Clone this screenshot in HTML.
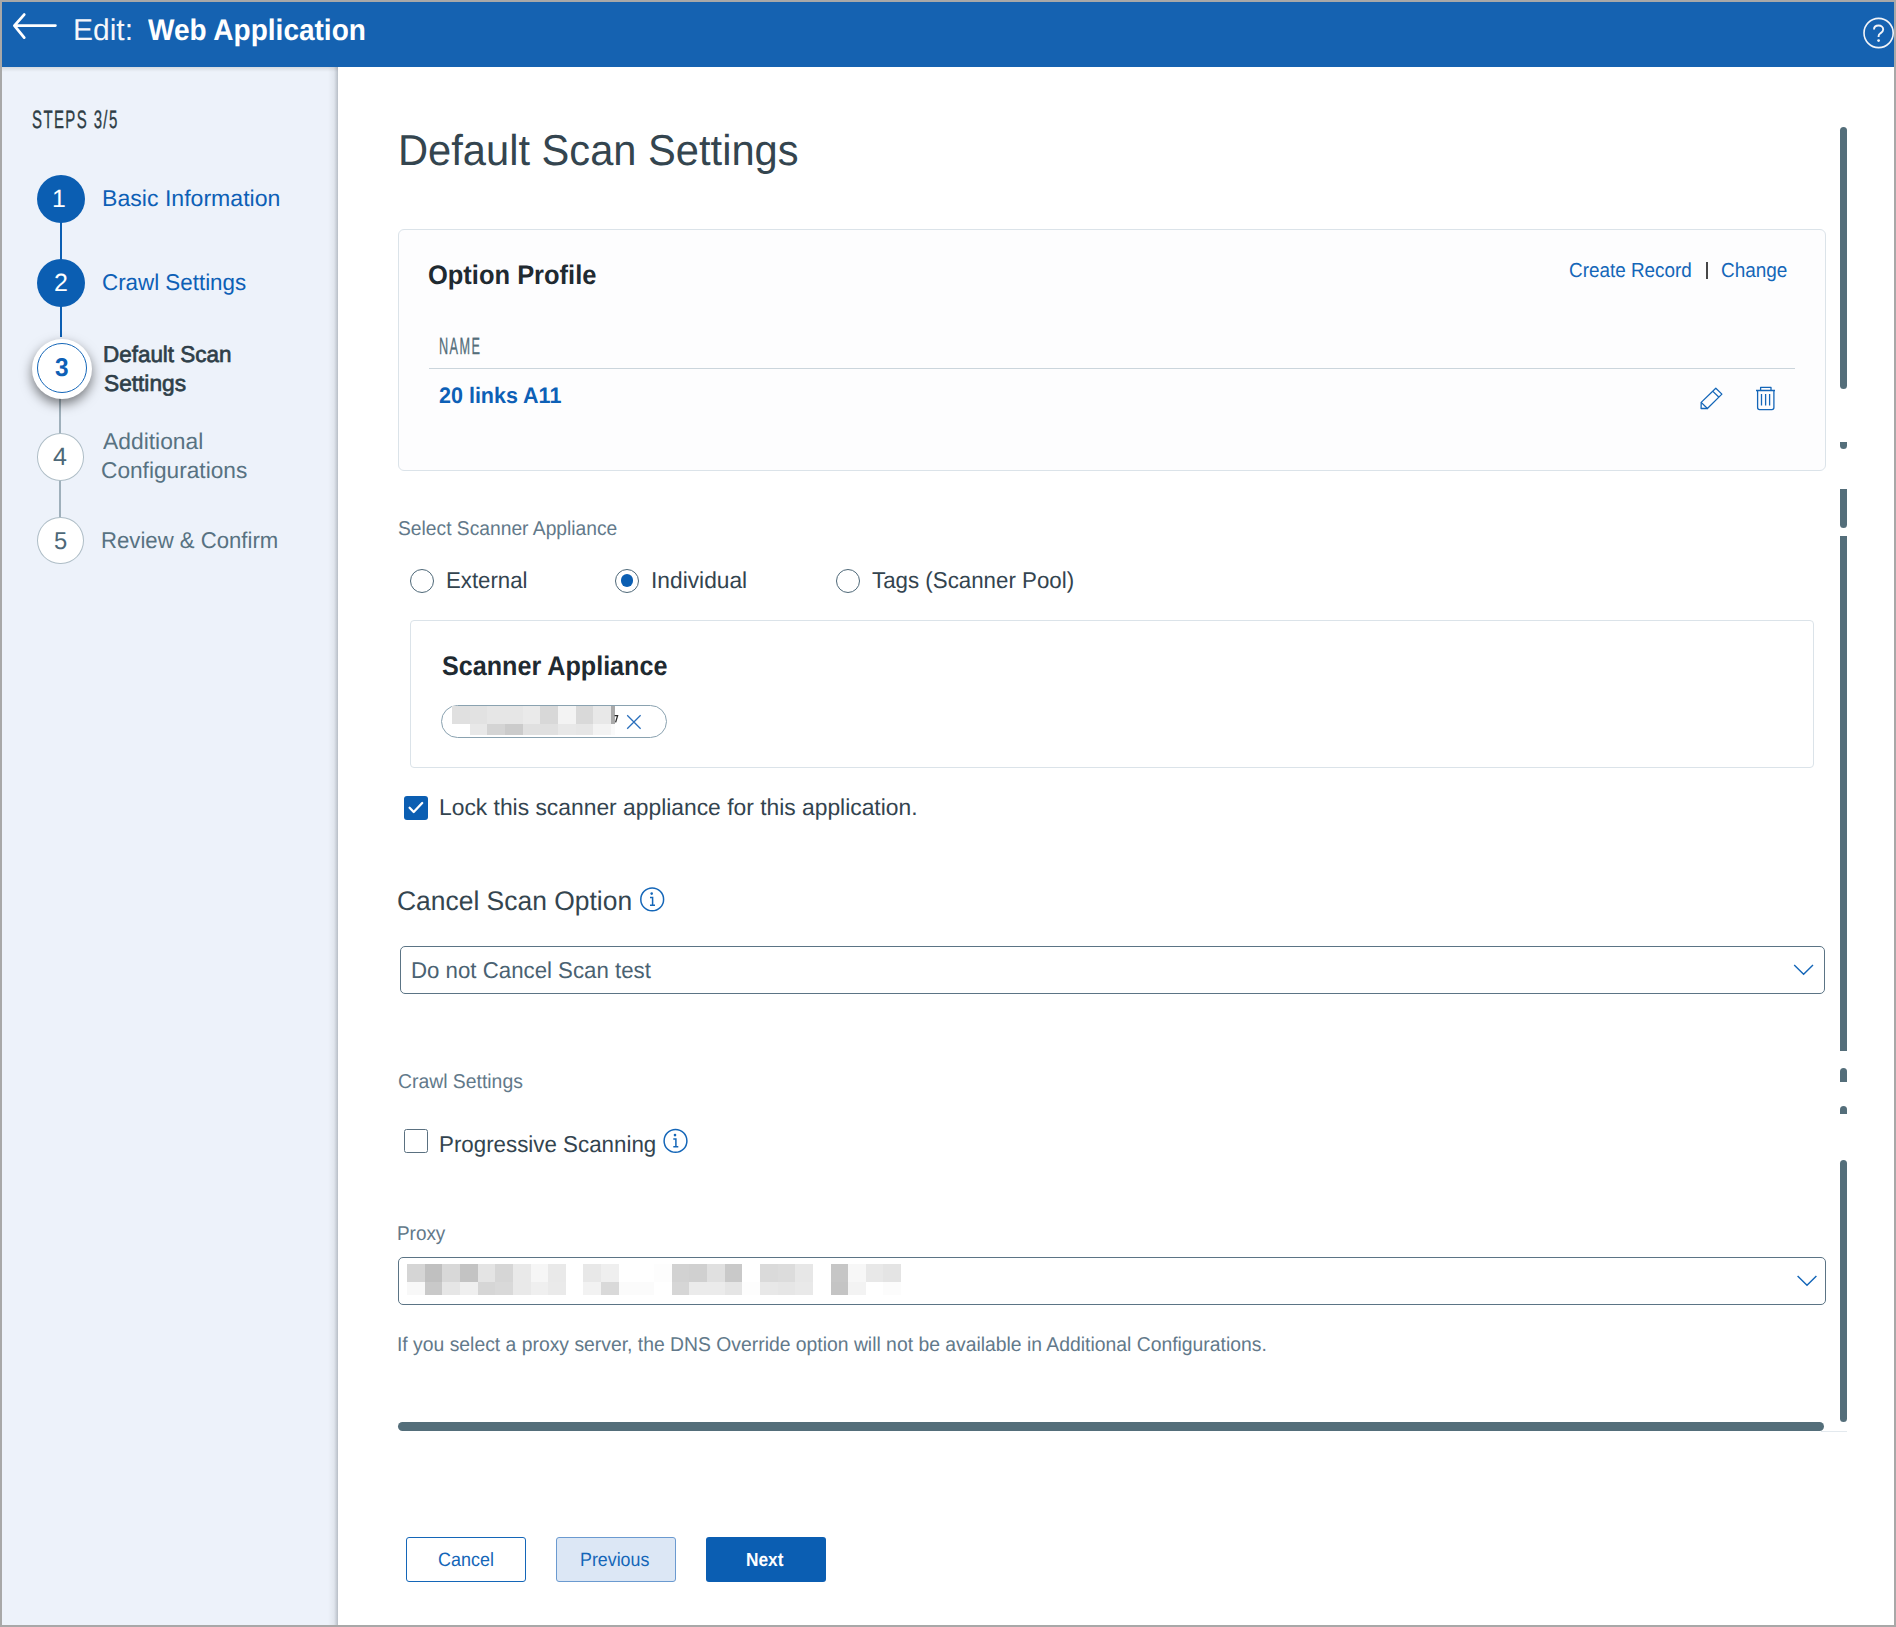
<!DOCTYPE html>
<html><head><meta charset="utf-8"><title>Edit: Web Application</title>
<style>
html,body{margin:0;padding:0;}
body{width:1896px;height:1627px;background:#a8a8a8;position:relative;overflow:hidden;font-family:"Liberation Sans",sans-serif;}
.abs{position:absolute;}
.t{position:absolute;white-space:nowrap;line-height:1;transform-origin:0 0;text-rendering:geometricPrecision;}
.vs{position:absolute;left:1840px;width:7px;background:#546e7a;}
.px{position:absolute;}
#app{position:absolute;left:2px;top:2px;width:1892px;height:1623px;background:#fff;overflow:hidden;}
</style></head><body>
<div id="app"></div>
<!-- header -->
<div class="abs" style="left:2px;top:2px;width:1892px;height:65px;background:#1562b1"></div>
<svg class="abs" style="left:0;top:0" width="1896" height="70" viewBox="0 0 1896 70">
  <path d="M55.4 25.6 H15 M24.2 14.6 L14.4 25.6 L24.2 37.6" fill="none" stroke="#fff" stroke-width="2.8" stroke-linecap="round" stroke-linejoin="round"/>
  <circle cx="1878.6" cy="33" r="14.6" fill="none" stroke="#f2f4f8" stroke-width="1.6"/>
  <path d="M1874 29.6 C1874 27.1 1876 25.5 1878.6 25.5 C1881.3 25.5 1883.2 27.2 1883.2 29.5 C1883.2 31.6 1881.7 32.5 1880.2 33.5 C1879.1 34.2 1878.6 34.9 1878.6 36.2 L1878.6 37" fill="none" stroke="#f2f4f8" stroke-width="1.9"/>
  <circle cx="1878.6" cy="40.6" r="1.4" fill="#f2f4f8"/>
</svg>
<!-- sidebar -->
<div class="abs" style="left:2px;top:67px;width:336px;height:1558px;background:#edf2fa"></div>
<div class="abs" style="left:2px;top:67px;width:336px;height:5px;background:linear-gradient(to bottom,rgba(0,0,0,0.10),rgba(0,0,0,0))"></div>
<div class="abs" style="left:328px;top:67px;width:10px;height:1558px;background:linear-gradient(to right,rgba(60,70,80,0),rgba(60,70,80,0.07) 60%,rgba(60,70,80,0.30))"></div>
<!-- steps -->
<div class="abs" style="left:60px;top:222px;width:2.2px;height:38px;background:#0b5eb2"></div>
<div class="abs" style="left:60px;top:306px;width:2.2px;height:31px;background:#0b5eb2"></div>
<div class="abs" style="left:59.2px;top:398px;width:2px;height:36px;background:#9fb0bb"></div>
<div class="abs" style="left:59px;top:480px;width:2px;height:37px;background:#9fb0bb"></div>
<div class="abs" style="left:36.8px;top:174.8px;width:48.4px;height:48.4px;border-radius:50%;background:#0b5eb2"></div>
<div class="abs" style="left:36.8px;top:258.8px;width:48.4px;height:48.4px;border-radius:50%;background:#0b5eb2"></div>
<div class="abs" style="left:31.9px;top:338.9px;width:60px;height:60px;border-radius:50%;background:#fff;box-shadow:0 5px 12px rgba(0,0,0,0.5)"></div>
<div class="abs" style="left:36.8px;top:342.7px;width:50.4px;height:50.4px;box-sizing:border-box;border-radius:50%;border:1.3px solid #1466b8"></div>
<div class="abs" style="left:37.1px;top:433px;width:46.8px;height:47.7px;box-sizing:border-box;border-radius:50%;border:1.2px solid #aebdc6;background:#fff"></div>
<div class="abs" style="left:37.1px;top:516.8px;width:46.8px;height:47.7px;box-sizing:border-box;border-radius:50%;border:1.2px solid #aebdc6;background:#fff"></div>

<!-- main: option profile card -->
<div class="abs" style="left:398px;top:229px;width:1428px;height:242px;box-sizing:border-box;border:1px solid #dbe3e9;border-radius:6px;background:#fdfdfe"></div>
<div class="abs" style="left:429px;top:368px;width:1366px;height:1.2px;background:#cbd5dc"></div>
<div class="abs" style="left:1705.6px;top:262px;width:2.2px;height:17px;background:#474747"></div>
<svg class="abs" style="left:1690px;top:375px" width="100" height="45" viewBox="1690 375 100 45">
  <g fill="none" stroke="#1466b8" stroke-width="1.3" stroke-linejoin="round">
    <path d="M1701.2 402.4 L1715.8 388.2 L1721.9 394.1 L1707.4 408.5 Z"/>
    <path d="M1701.2 402.4 L1701.1 408.5 L1707.4 408.5"/>
    <path d="M1712.9 391.4 L1718.7 397.0"/>
    <path d="M1756 390.5 H1775 M1760.6 390.5 V387.4 H1771 V390.5 M1757.6 390.5 V407.6 Q1757.6 409.6 1759.6 409.6 H1771.9 Q1773.9 409.6 1773.9 407.6 V390.5 M1761.5 394 V405.6 M1765.6 394 V405.6 M1769.6 394 V405.6"/>
  </g>
</svg>

<!-- radios -->
<div class="abs" style="left:410px;top:568.8px;width:24px;height:24px;box-sizing:border-box;border-radius:50%;border:1.3px solid #4e6878;background:#fff"></div>
<div class="abs" style="left:615px;top:568.8px;width:24px;height:24px;box-sizing:border-box;border-radius:50%;border:1.3px solid #4e6878;background:#fff"></div>
<div class="abs" style="left:620.6px;top:574.4px;width:12.8px;height:12.8px;border-radius:50%;background:#0b5eb2"></div>
<div class="abs" style="left:836px;top:568.8px;width:24px;height:24px;box-sizing:border-box;border-radius:50%;border:1.3px solid #4e6878;background:#fff"></div>

<!-- scanner card -->
<div class="abs" style="left:410px;top:620px;width:1404px;height:148px;box-sizing:border-box;border:1px solid #dbe3e9;border-radius:4px;background:#fff"></div>
<div class="abs" style="left:441.2px;top:705.2px;width:225.5px;height:32.8px;box-sizing:border-box;border:1.2px solid #8aa2b0;border-radius:17px;background:#fff"></div>
<div class="px" style="left:452px;top:706px;width:18px;height:18px;background:#e0e0e0"></div><div class="px" style="left:470px;top:706px;width:17px;height:18px;background:#e2e2e2"></div><div class="px" style="left:487px;top:706px;width:18px;height:18px;background:#e6e6e6"></div><div class="px" style="left:505px;top:706px;width:18px;height:18px;background:#e6e6e6"></div><div class="px" style="left:523px;top:706px;width:17px;height:18px;background:#eaeaea"></div><div class="px" style="left:540px;top:706px;width:18px;height:18px;background:#d8d8d8"></div><div class="px" style="left:558px;top:706px;width:18px;height:18px;background:#f3f3f3"></div><div class="px" style="left:576px;top:706px;width:17px;height:18px;background:#d9d9d9"></div><div class="px" style="left:593px;top:706px;width:18px;height:18px;background:#e8e8e8"></div><div class="px" style="left:611px;top:706px;width:4px;height:18px;background:#aaaaaa"></div><div class="px" style="left:470px;top:724px;width:17px;height:11px;background:#e8e8e8"></div><div class="px" style="left:487px;top:724px;width:18px;height:11px;background:#d4d4d4"></div><div class="px" style="left:505px;top:724px;width:18px;height:11px;background:#cbcbcb"></div><div class="px" style="left:523px;top:724px;width:17px;height:11px;background:#e0e0e0"></div><div class="px" style="left:540px;top:724px;width:18px;height:11px;background:#e0e0e0"></div><div class="px" style="left:558px;top:724px;width:18px;height:11px;background:#e8e8e8"></div><div class="px" style="left:576px;top:724px;width:17px;height:11px;background:#e6e6e6"></div><div class="px" style="left:593px;top:724px;width:18px;height:11px;background:#f3f3f3"></div><div class="px" style="left:611px;top:724px;width:4px;height:11px;background:#fafafa"></div>
<svg class="abs" style="left:610px;top:710px" width="12" height="16" viewBox="610 710 12 16"><path d="M614.6 715.6 H617.6 L615.6 722.4" fill="none" stroke="#2a2a2a" stroke-width="1.3"/></svg>
<svg class="abs" style="left:620px;top:708px" width="28" height="28" viewBox="620 708 28 28">
  <path d="M627.2 715.2 L640.6 728.8 M640.6 715.2 L627.2 728.8" stroke="#2a6fbc" stroke-width="1.25" fill="none"/>
</svg>

<!-- lock checkbox -->
<div class="abs" style="left:404px;top:796px;width:24px;height:24px;border-radius:3px;background:#0b5eb2"></div>
<svg class="abs" style="left:400px;top:790px" width="40" height="40" viewBox="400 790 40 40">
  <path d="M409.6 807.8 L413.7 812 L422.2 803" fill="none" stroke="#fff" stroke-width="2.3" stroke-linecap="round" stroke-linejoin="round"/>
</svg>

<!-- info icons -->
<svg class="abs" style="left:630px;top:880px" width="50" height="40" viewBox="630 880 50 40">
  <circle cx="652.2" cy="899.4" r="11.4" fill="none" stroke="#1466b8" stroke-width="1.5"/>
  <circle cx="651.7" cy="893.6" r="1.3" fill="#1466b8"/>
  <path d="M650 897.6 H652.6 V905.2 M650 905.2 H655" fill="none" stroke="#1466b8" stroke-width="1.5"/>
</svg>

<!-- select 1 -->
<div class="abs" style="left:399.5px;top:946px;width:1425.5px;height:48px;box-sizing:border-box;border:1.4px solid #5b7485;border-radius:5px;background:#fff"></div>
<svg class="abs" style="left:1780px;top:950px" width="40" height="40" viewBox="1780 950 40 40">
  <path d="M1794.2 965 L1803.6 974.2 L1813 965" fill="none" stroke="#1466b8" stroke-width="1.45"/>
</svg>

<!-- progressive checkbox -->
<div class="abs" style="left:404px;top:1129px;width:24px;height:23.8px;box-sizing:border-box;border:1.3px solid #5a7080;border-radius:2.5px;background:#fff"></div>
<svg class="abs" style="left:655px;top:1120px" width="40" height="40" viewBox="655 1120 40 40">
  <circle cx="675.5" cy="1140.9" r="11.4" fill="none" stroke="#1466b8" stroke-width="1.5"/>
  <circle cx="675" cy="1135.1" r="1.3" fill="#1466b8"/>
  <path d="M673.3 1139.1 H675.9 V1146.7 M673.3 1146.7 H678.3" fill="none" stroke="#1466b8" stroke-width="1.5"/>
</svg>

<!-- proxy select -->
<div class="abs" style="left:398px;top:1257px;width:1428px;height:47.8px;box-sizing:border-box;border:1.4px solid #5b7485;border-radius:5px;background:#fff"></div>
<div class="px" style="left:407px;top:1264px;width:18px;height:18px;background:#d5d5d5"></div><div class="px" style="left:425px;top:1264px;width:17px;height:18px;background:#c0c0c0"></div><div class="px" style="left:442px;top:1264px;width:18px;height:18px;background:#d8d8d8"></div><div class="px" style="left:460px;top:1264px;width:18px;height:18px;background:#c3c3c3"></div><div class="px" style="left:478px;top:1264px;width:17px;height:18px;background:#e4e4e4"></div><div class="px" style="left:495px;top:1264px;width:18px;height:18px;background:#d6d6d6"></div><div class="px" style="left:513px;top:1264px;width:18px;height:18px;background:#e9e9e9"></div><div class="px" style="left:531px;top:1264px;width:17px;height:18px;background:#f6f6f6"></div><div class="px" style="left:548px;top:1264px;width:18px;height:18px;background:#e9e9e9"></div><div class="px" style="left:583px;top:1264px;width:18px;height:18px;background:#e8e8e8"></div><div class="px" style="left:601px;top:1264px;width:18px;height:18px;background:#efefef"></div><div class="px" style="left:654px;top:1264px;width:18px;height:18px;background:#fdfdfd"></div><div class="px" style="left:672px;top:1264px;width:17px;height:18px;background:#d2d2d2"></div><div class="px" style="left:689px;top:1264px;width:18px;height:18px;background:#d0d0d0"></div><div class="px" style="left:707px;top:1264px;width:18px;height:18px;background:#e0e0e0"></div><div class="px" style="left:725px;top:1264px;width:17px;height:18px;background:#c9c9c9"></div><div class="px" style="left:760px;top:1264px;width:18px;height:18px;background:#dadada"></div><div class="px" style="left:778px;top:1264px;width:17px;height:18px;background:#dcdcdc"></div><div class="px" style="left:795px;top:1264px;width:18px;height:18px;background:#e7e7e7"></div><div class="px" style="left:831px;top:1264px;width:17px;height:18px;background:#c6c6c6"></div><div class="px" style="left:848px;top:1264px;width:18px;height:18px;background:#f7f7f7"></div><div class="px" style="left:866px;top:1264px;width:17px;height:18px;background:#e8e8e8"></div><div class="px" style="left:883px;top:1264px;width:18px;height:18px;background:#e4e4e4"></div><div class="px" style="left:407px;top:1282px;width:18px;height:13px;background:#f8f8f8"></div><div class="px" style="left:425px;top:1282px;width:17px;height:13px;background:#c9c9c9"></div><div class="px" style="left:442px;top:1282px;width:18px;height:13px;background:#e6e6e6"></div><div class="px" style="left:460px;top:1282px;width:18px;height:13px;background:#efefef"></div><div class="px" style="left:478px;top:1282px;width:17px;height:13px;background:#d6d6d6"></div><div class="px" style="left:495px;top:1282px;width:18px;height:13px;background:#d9d9d9"></div><div class="px" style="left:513px;top:1282px;width:18px;height:13px;background:#e9e9e9"></div><div class="px" style="left:531px;top:1282px;width:17px;height:13px;background:#efefef"></div><div class="px" style="left:548px;top:1282px;width:18px;height:13px;background:#eaeaea"></div><div class="px" style="left:583px;top:1282px;width:18px;height:13px;background:#f2f2f2"></div><div class="px" style="left:601px;top:1282px;width:18px;height:13px;background:#d9d9d9"></div><div class="px" style="left:619px;top:1282px;width:35px;height:13px;background:#fbfbfb"></div><div class="px" style="left:672px;top:1282px;width:17px;height:13px;background:#d6d6d6"></div><div class="px" style="left:689px;top:1282px;width:18px;height:13px;background:#ebebeb"></div><div class="px" style="left:707px;top:1282px;width:18px;height:13px;background:#ebebeb"></div><div class="px" style="left:725px;top:1282px;width:17px;height:13px;background:#e5e5e5"></div><div class="px" style="left:742px;top:1282px;width:18px;height:13px;background:#fdfdfd"></div><div class="px" style="left:760px;top:1282px;width:18px;height:13px;background:#e8e8e8"></div><div class="px" style="left:778px;top:1282px;width:17px;height:13px;background:#e6e6e6"></div><div class="px" style="left:795px;top:1282px;width:18px;height:13px;background:#e9e9e9"></div><div class="px" style="left:831px;top:1282px;width:17px;height:13px;background:#c4c4c4"></div><div class="px" style="left:848px;top:1282px;width:18px;height:13px;background:#f3f3f3"></div><div class="px" style="left:883px;top:1282px;width:18px;height:13px;background:#fcfcfc"></div>
<svg class="abs" style="left:1780px;top:1260px" width="40" height="40" viewBox="1780 1260 40 40">
  <path d="M1797.6 1276 L1807 1285.2 L1816.4 1276" fill="none" stroke="#1466b8" stroke-width="1.45"/>
</svg>

<!-- scrollbars -->
<div class="vs" style="top:127px;height:262px;border-radius:3.5px 3.5px 3.5px 3.5px"></div>
<div class="vs" style="top:442px;height:7px;border-radius:0px 0px 3.5px 3.5px"></div>
<div class="vs" style="top:489px;height:39px;border-radius:0px 0px 3.5px 3.5px"></div>
<div class="vs" style="top:536px;height:515px;border-radius:0px 0px 0px 0px"></div>
<div class="vs" style="top:1068px;height:14px;border-radius:3.5px 3.5px 0px 0px"></div>
<div class="vs" style="top:1106px;height:8px;border-radius:3.5px 3.5px 0px 0px"></div>
<div class="vs" style="top:1160px;height:262px;border-radius:3.5px 3.5px 3.5px 3.5px"></div>
<div class="abs" style="left:398px;top:1422px;width:1426px;height:9px;border-radius:4.5px;background:#546e7a"></div>
<div class="abs" style="left:1821px;top:1431px;width:26px;height:1px;background:#e3e9ee"></div>

<!-- buttons -->
<div class="abs" style="left:406px;top:1537px;width:120px;height:45px;box-sizing:border-box;border:1.5px solid #1466b8;border-radius:3px;background:#fff"></div>
<div class="abs" style="left:556px;top:1537px;width:120px;height:45px;box-sizing:border-box;border:1.2px solid #6b9ad0;border-radius:3px;background:#dce7f5"></div>
<div class="abs" style="left:706px;top:1537px;width:120px;height:45px;border-radius:3px;background:#0b5eb2"></div>

<div class="t" style="left:73.10px;top:15.93px;font-size:30.14px;font-weight:400;color:#f4f6fa;transform:scaleX(0.9953)">Edit:</div>
<div class="t" style="left:147.80px;top:16.14px;font-size:29.71px;font-weight:700;color:#ffffff;transform:scaleX(0.9431)">Web Application</div>
<div class="t" style="left:31.80px;top:108.00px;font-size:25.00px;font-weight:400;color:#2e3d45;letter-spacing:2.3px;-webkit-text-stroke:0.35px #2e3d45;transform:scaleX(0.6000)">STEPS 3/5</div>
<div class="t" style="left:101.65px;top:187.10px;font-size:22.80px;font-weight:400;color:#0d60b6;transform:scaleX(1.0131)">Basic Information</div>
<div class="t" style="left:102.38px;top:271.10px;font-size:22.80px;font-weight:400;color:#0d60b6;transform:scaleX(0.9810)">Crawl Settings</div>
<div class="t" style="left:102.91px;top:343.10px;font-size:22.80px;font-weight:400;color:#2f3f49;-webkit-text-stroke:0.7px #2f3f49;transform:scaleX(0.9840)">Default Scan</div>
<div class="t" style="left:103.79px;top:372.10px;font-size:22.80px;font-weight:400;color:#2f3f49;-webkit-text-stroke:0.7px #2f3f49;transform:scaleX(0.9952)">Settings</div>
<div class="t" style="left:102.50px;top:430.10px;font-size:22.80px;font-weight:400;color:#587282;transform:scaleX(1.0018)">Additional</div>
<div class="t" style="left:101.37px;top:459.10px;font-size:22.80px;font-weight:400;color:#587282;transform:scaleX(0.9952)">Configurations</div>
<div class="t" style="left:100.73px;top:529.10px;font-size:22.80px;font-weight:400;color:#587282;transform:scaleX(0.9716)">Review &amp; Confirm</div>
<div class="t" style="left:397.67px;top:129.91px;font-size:43.19px;font-weight:400;color:#34454f;transform:scaleX(0.9645)">Default Scan Settings</div>
<div class="t" style="left:428.38px;top:262.00px;font-size:27.00px;font-weight:700;color:#1f2a31;transform:scaleX(0.9434)">Option Profile</div>
<div class="t" style="left:1569.15px;top:261.35px;font-size:20.30px;font-weight:400;color:#1466b8;transform:scaleX(0.9310)">Create Record</div>
<div class="t" style="left:1721.45px;top:261.35px;font-size:20.30px;font-weight:400;color:#1466b8;transform:scaleX(0.9342)">Change</div>
<div class="t" style="left:439.28px;top:334.75px;font-size:23.50px;font-weight:400;color:#546e7a;letter-spacing:2.6px;-webkit-text-stroke:0.3px #546e7a;transform:scaleX(0.5400)">NAME</div>
<div class="t" style="left:439.45px;top:384.80px;font-size:22.40px;font-weight:700;color:#0d60b6;transform:scaleX(0.9606)">20 links A11</div>
<div class="t" style="left:397.73px;top:518.50px;font-size:20.00px;font-weight:400;color:#62798a;transform:scaleX(0.9622)">Select Scanner Appliance</div>
<div class="t" style="left:445.62px;top:569.00px;font-size:23.00px;font-weight:400;color:#33444f;transform:scaleX(0.9654)">External</div>
<div class="t" style="left:651.25px;top:569.00px;font-size:23.00px;font-weight:400;color:#33444f;transform:scaleX(0.9896)">Individual</div>
<div class="t" style="left:872.15px;top:569.00px;font-size:23.00px;font-weight:400;color:#33444f;transform:scaleX(0.9700)">Tags (Scanner Pool)</div>
<div class="t" style="left:441.60px;top:653.00px;font-size:27.00px;font-weight:700;color:#1f2a31;transform:scaleX(0.9312)">Scanner Appliance</div>
<div class="t" style="left:438.97px;top:796.00px;font-size:23.00px;font-weight:400;color:#33444f;transform:scaleX(0.9928)">Lock this scanner appliance for this application.</div>
<div class="t" style="left:397.38px;top:888.00px;font-size:27.00px;font-weight:400;color:#34454f;transform:scaleX(0.9790)">Cancel Scan Option</div>
<div class="t" style="left:411.12px;top:959.00px;font-size:23.00px;font-weight:400;color:#4a6272;transform:scaleX(0.9670)">Do not Cancel Scan test</div>
<div class="t" style="left:397.73px;top:1071.50px;font-size:20.00px;font-weight:400;color:#62798a;transform:scaleX(0.9683)">Crawl Settings</div>
<div class="t" style="left:439.11px;top:1133.00px;font-size:23.00px;font-weight:400;color:#33444f;transform:scaleX(0.9710)">Progressive Scanning</div>
<div class="t" style="left:397.49px;top:1223.50px;font-size:20.00px;font-weight:400;color:#62798a;transform:scaleX(0.9450)">Proxy</div>
<div class="t" style="left:397.26px;top:1334.50px;font-size:20.00px;font-weight:400;color:#62798a;transform:scaleX(0.9671)">If you select a proxy server, the DNS Override option will not be available in Additional Configurations.</div>
<div class="t" style="left:437.60px;top:1551.36px;font-size:19.28px;font-weight:400;color:#1466b8;transform:scaleX(0.9319)">Cancel</div>
<div class="t" style="left:580.27px;top:1551.36px;font-size:19.28px;font-weight:400;color:#1466b8;transform:scaleX(0.9249)">Previous</div>
<div class="t" style="left:746.06px;top:1550.50px;font-size:19.00px;font-weight:700;color:#ffffff;transform:scaleX(0.9103)">Next</div>
<div class="t" style="left:51.97px;top:187.04px;font-size:24.93px;font-weight:400;color:#ffffff;transform:scaleX(0.9938)">1</div>
<div class="t" style="left:53.75px;top:271.04px;font-size:24.93px;font-weight:400;color:#ffffff;transform:scaleX(1.0029)">2</div>
<div class="t" style="left:54.51px;top:355.64px;font-size:25.71px;font-weight:700;color:#0d60b6;transform:scaleX(0.9489)">3</div>
<div class="t" style="left:53.10px;top:444.89px;font-size:25.22px;font-weight:400;color:#4d6878;transform:scaleX(0.9953)">4</div>
<div class="t" style="left:54.05px;top:529.75px;font-size:24.49px;font-weight:400;color:#4d6878;transform:scaleX(0.9697)">5</div>
</body></html>
